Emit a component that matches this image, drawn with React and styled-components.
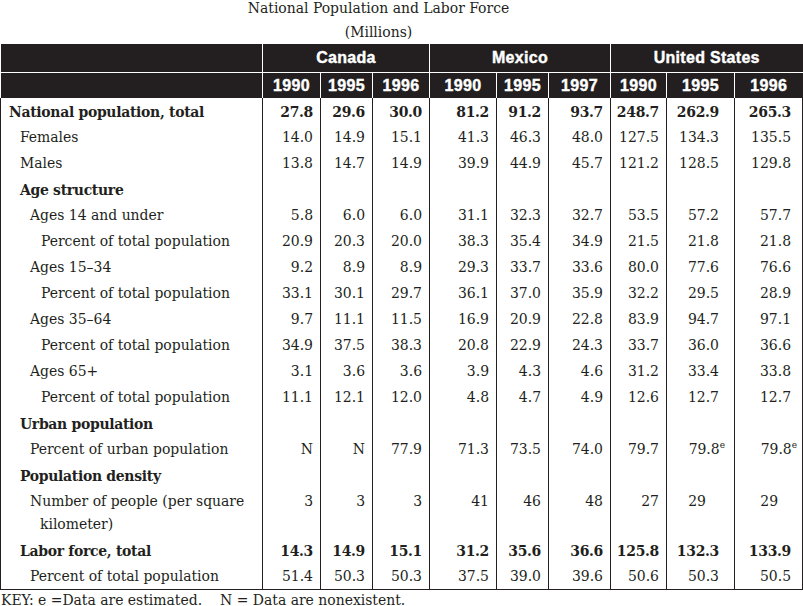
import styled, { createGlobalStyle } from "styled-components";

const GlobalStyle = createGlobalStyle`
  body {
    margin: 0;
    background: #fff;
    color: #231f20;
    font-family: "DejaVu Serif Condensed", "DejaVu Serif", "Liberation Serif", serif;
  }
`;

const INK = "#231f20";

const countries = [
  { name: "Canada", years: ["1990", "1995", "1996"] },
  { name: "Mexico", years: ["1990", "1995", "1997"] },
  { name: "United States", years: ["1990", "1995", "1996"] },
];

const widths = [262, 58, 52, 57, 67, 52, 62, 56, 68, 68];
// right padding per data column; the last two US columns line up on the decimal point
const pads = [7, 7, 7, 7, 7, 7, 7, 15, 11];
const decimalCols = [7, 8];
const indents = [8, 19, 29, 40];

const rows = [
  { label: "National population, total", level: 0, bold: true, values: ["27.8", "29.6", "30.0", "81.2", "91.2", "93.7", "248.7", "262.9", "265.3"] },
  { label: "Females", level: 1, values: ["14.0", "14.9", "15.1", "41.3", "46.3", "48.0", "127.5", "134.3", "135.5"] },
  { label: "Males", level: 1, values: ["13.8", "14.7", "14.9", "39.9", "44.9", "45.7", "121.2", "128.5", "129.8"] },
  { label: "Age structure", level: 1, bold: true },
  { label: "Ages 14 and under", level: 2, values: ["5.8", "6.0", "6.0", "31.1", "32.3", "32.7", "53.5", "57.2", "57.7"] },
  { label: "Percent of total population", level: 3, values: ["20.9", "20.3", "20.0", "38.3", "35.4", "34.9", "21.5", "21.8", "21.8"] },
  { label: "Ages 15–34", level: 2, values: ["9.2", "8.9", "8.9", "29.3", "33.7", "33.6", "80.0", "77.6", "76.6"] },
  { label: "Percent of total population", level: 3, values: ["33.1", "30.1", "29.7", "36.1", "37.0", "35.9", "32.2", "29.5", "28.9"] },
  { label: "Ages 35–64", level: 2, values: ["9.7", "11.1", "11.5", "16.9", "20.9", "22.8", "83.9", "94.7", "97.1"] },
  { label: "Percent of total population", level: 3, values: ["34.9", "37.5", "38.3", "20.8", "22.9", "24.3", "33.7", "36.0", "36.6"] },
  { label: "Ages 65+", level: 2, values: ["3.1", "3.6", "3.6", "3.9", "4.3", "4.6", "31.2", "33.4", "33.8"] },
  { label: "Percent of total population", level: 3, values: ["11.1", "12.1", "12.0", "4.8", "4.7", "4.9", "12.6", "12.7", "12.7"] },
  { label: "Urban population", level: 1, bold: true },
  { label: "Percent of urban population", level: 2, values: ["N", "N", "77.9", "71.3", "73.5", "74.0", "79.7", "79.8e", "79.8e"] },
  { label: "Population density", level: 1, bold: true },
  { label: "Number of people (per square kilometer)", level: 2, hang: true, values: ["3", "3", "3", "41", "46", "48", "27", "29", "29"] },
  { label: "Labor force, total", level: 1, bold: true, values: ["14.3", "14.9", "15.1", "31.2", "35.6", "36.6", "125.8", "132.3", "133.9"] },
  { label: "Percent of total population", level: 2, values: ["51.4", "50.3", "50.3", "37.5", "39.0", "39.6", "50.6", "50.3", "50.5"] },
];

export default function App() {
  return (
    <>
      <GlobalStyle />
      <Page>
        <Title>
          National Population and Labor Force
          <br />
          (Millions)
        </Title>
        <Table>
          <colgroup>
            {widths.map((w, i) => (
              <Col key={i} $w={w} />
            ))}
          </colgroup>
          <thead>
            <tr>
              <CountryTh />
              {countries.map((c) => (
                <CountryTh key={c.name} colSpan={3} $sep>
                  {c.name}
                </CountryTh>
              ))}
            </tr>
            <tr>
              <YearTh />
              {countries.map((c) =>
                c.years.map((y, i) => (
                  <YearTh key={c.name + y + i}>{y}</YearTh>
                ))
              )}
            </tr>
          </thead>
          <tbody>
            {rows.map((row, r) => (
              <tr key={r}>
                <LabelTd $indent={indents[row.level]} $bold={row.bold} $hang={row.hang}>
                  {row.label}
                </LabelTd>
                {widths.slice(1).map((_, i) => {
                  const v = row.values ? row.values[i] : "";
                  const est = v.endsWith("e");
                  const num = est ? v.slice(0, -1) : v;
                  const whole = decimalCols.includes(i) && num && !num.includes(".");
                  return (
                    <NumTd key={i} $pr={pads[i] + (whole ? 13 : 0)} $bold={row.bold}>
                      {num}
                      {est && <Sup>e</Sup>}
                    </NumTd>
                  );
                })}
              </tr>
            ))}
          </tbody>
        </Table>
        <Key>
          KEY: e =Data are estimated.<Gap />N = Data are nonexistent.
        </Key>
      </Page>
    </>
  );
}

const Page = styled.div`
  width: 803px;
  font-size: 15.5px;
`;

const Title = styled.div`
  margin-top: -4px;
  padding-right: 46px;
  text-align: center;
  line-height: 24px;
`;

const Table = styled.table`
  width: 802px;
  table-layout: fixed;
  border-collapse: collapse;
`;

const Col = styled.col`
  width: ${(p) => p.$w}px;
`;

const HeadCell = styled.th`
  background: ${INK};
  color: #fff;
  font-family: "Liberation Sans", Arial, sans-serif;
  font-weight: 700;
  font-size: 16px;
  letter-spacing: 0.3px;
  text-align: center;
  vertical-align: middle;
  padding: 0;
  -webkit-text-stroke: 0.4px #fff;
`;

const CountryTh = styled(HeadCell)`
  height: 28px;
  border-left: ${(p) => (p.$sep ? "1px solid #fff" : "none")};
`;

const YearTh = styled(HeadCell)`
  height: 25px;
  border-top: 1px solid #fff;
  border-left: 1px solid #fff;
`;

const BodyCell = styled.td`
  padding-top: 2px;
  padding-bottom: 1px;
  line-height: 23px;
  vertical-align: top;
  border-left: 1px solid ${INK};
  border-right: 1px solid ${INK};
  font-weight: ${(p) => (p.$bold ? 700 : 400)};
  letter-spacing: ${(p) => (p.$bold ? "-0.3px" : "0")};
  tr:last-child > & {
    border-bottom: 1px solid ${INK};
  }
`;

const LabelTd = styled(BodyCell)`
  padding-left: ${(p) => p.$indent + (p.$hang ? 10 : 0)}px;
  text-indent: ${(p) => (p.$hang ? -10 : 0)}px;
  padding-right: 8px;
  text-align: left;
`;

const NumTd = styled(BodyCell)`
  text-align: right;
  padding-right: ${(p) => p.$pr}px;
  white-space: nowrap;
`;

const Sup = styled.sup`
  font-size: 10px;
  line-height: 0;
  vertical-align: 6px;
  margin-right: -6px;
  font-weight: 400;
`;

const Key = styled.div`
  padding-left: 1px;
  line-height: 20px;
`;

const Gap = styled.span`
  display: inline-block;
  width: 18px;
`;
